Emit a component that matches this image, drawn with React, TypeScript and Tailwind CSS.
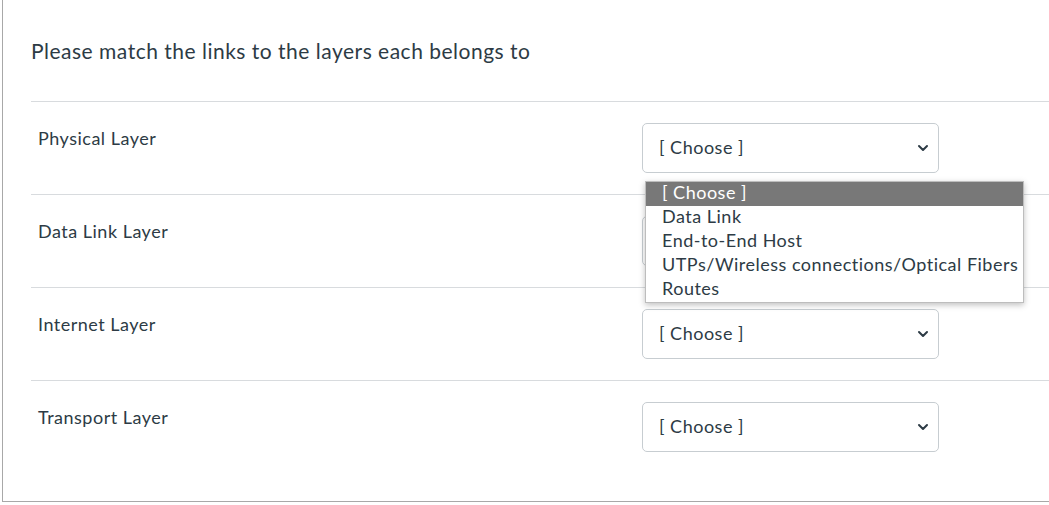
import React from "react";

const Chevron = () => (
  <svg width="12" height="8" viewBox="0 0 12 8" className="shrink-0">
    <polyline points="2,2 6,6 10,2" fill="none" stroke="#2d3b45" strokeWidth="2" strokeLinecap="round" strokeLinejoin="round" />
  </svg>
);

const Select = () => (
  <div className="w-[297px] h-[50px] rounded-[5px] border border-[#c7cdd1] bg-white flex items-center justify-between pl-[16px] pr-[9px] pb-[1px] text-[18px] tracking-[0.5px] text-[#2d3b45]">
    <span>[ Choose ]</span>
    <Chevron />
  </div>
);

const rows = ["Physical Layer", "Data Link Layer", "Internet Layer", "Transport Layer"];
const options = ["[ Choose ]", "Data Link", "End-to-End Host", "UTPs/Wireless connections/Optical Fibers", "Routes"];

export default function App() {
  return (
    <div className="relative w-[1049px] h-[505px] bg-white overflow-hidden" style={{ fontFamily: "Lato, 'Noto Sans', sans-serif" }}>
      <div className="ml-[2px] w-[1100px] h-[502px] border-l border-b border-[#a8a8a8] text-[#2d3b45]">
        <div className="pl-[28px] pt-[37px] h-[101px]">
          <p className="text-[21px] leading-[28px] tracking-[0.5px]">Please match the links to the layers each belongs to</p>
        </div>
        <div className="ml-[28px]">
          {rows.map((r) => (
            <div key={r} className="h-[93px] border-t border-[#d8dbde] flex">
              <div className="w-[611px] pl-[7px] pt-[24px] text-[18px] leading-[24px] tracking-[0.5px]">{r}</div>
              <div className="pt-[21px]">
                <Select />
              </div>
            </div>
          ))}
        </div>
      </div>
      <div className="absolute left-[645px] top-[181px] w-[379px] bg-white border border-[#bdbdbd] shadow-[0_2px_6px_rgba(0,0,0,0.25)] text-[18px] leading-[21px] tracking-[0.5px] text-[#2d3b45]">
        {options.map((o, i) => (
          <div key={o} className={i === 0 ? "bg-[#787878] text-white pl-[16px] h-[24px] whitespace-nowrap" : "pl-[16px] h-[24px] whitespace-nowrap"}>
            {o}
          </div>
        ))}
      </div>
    </div>
  );
}
